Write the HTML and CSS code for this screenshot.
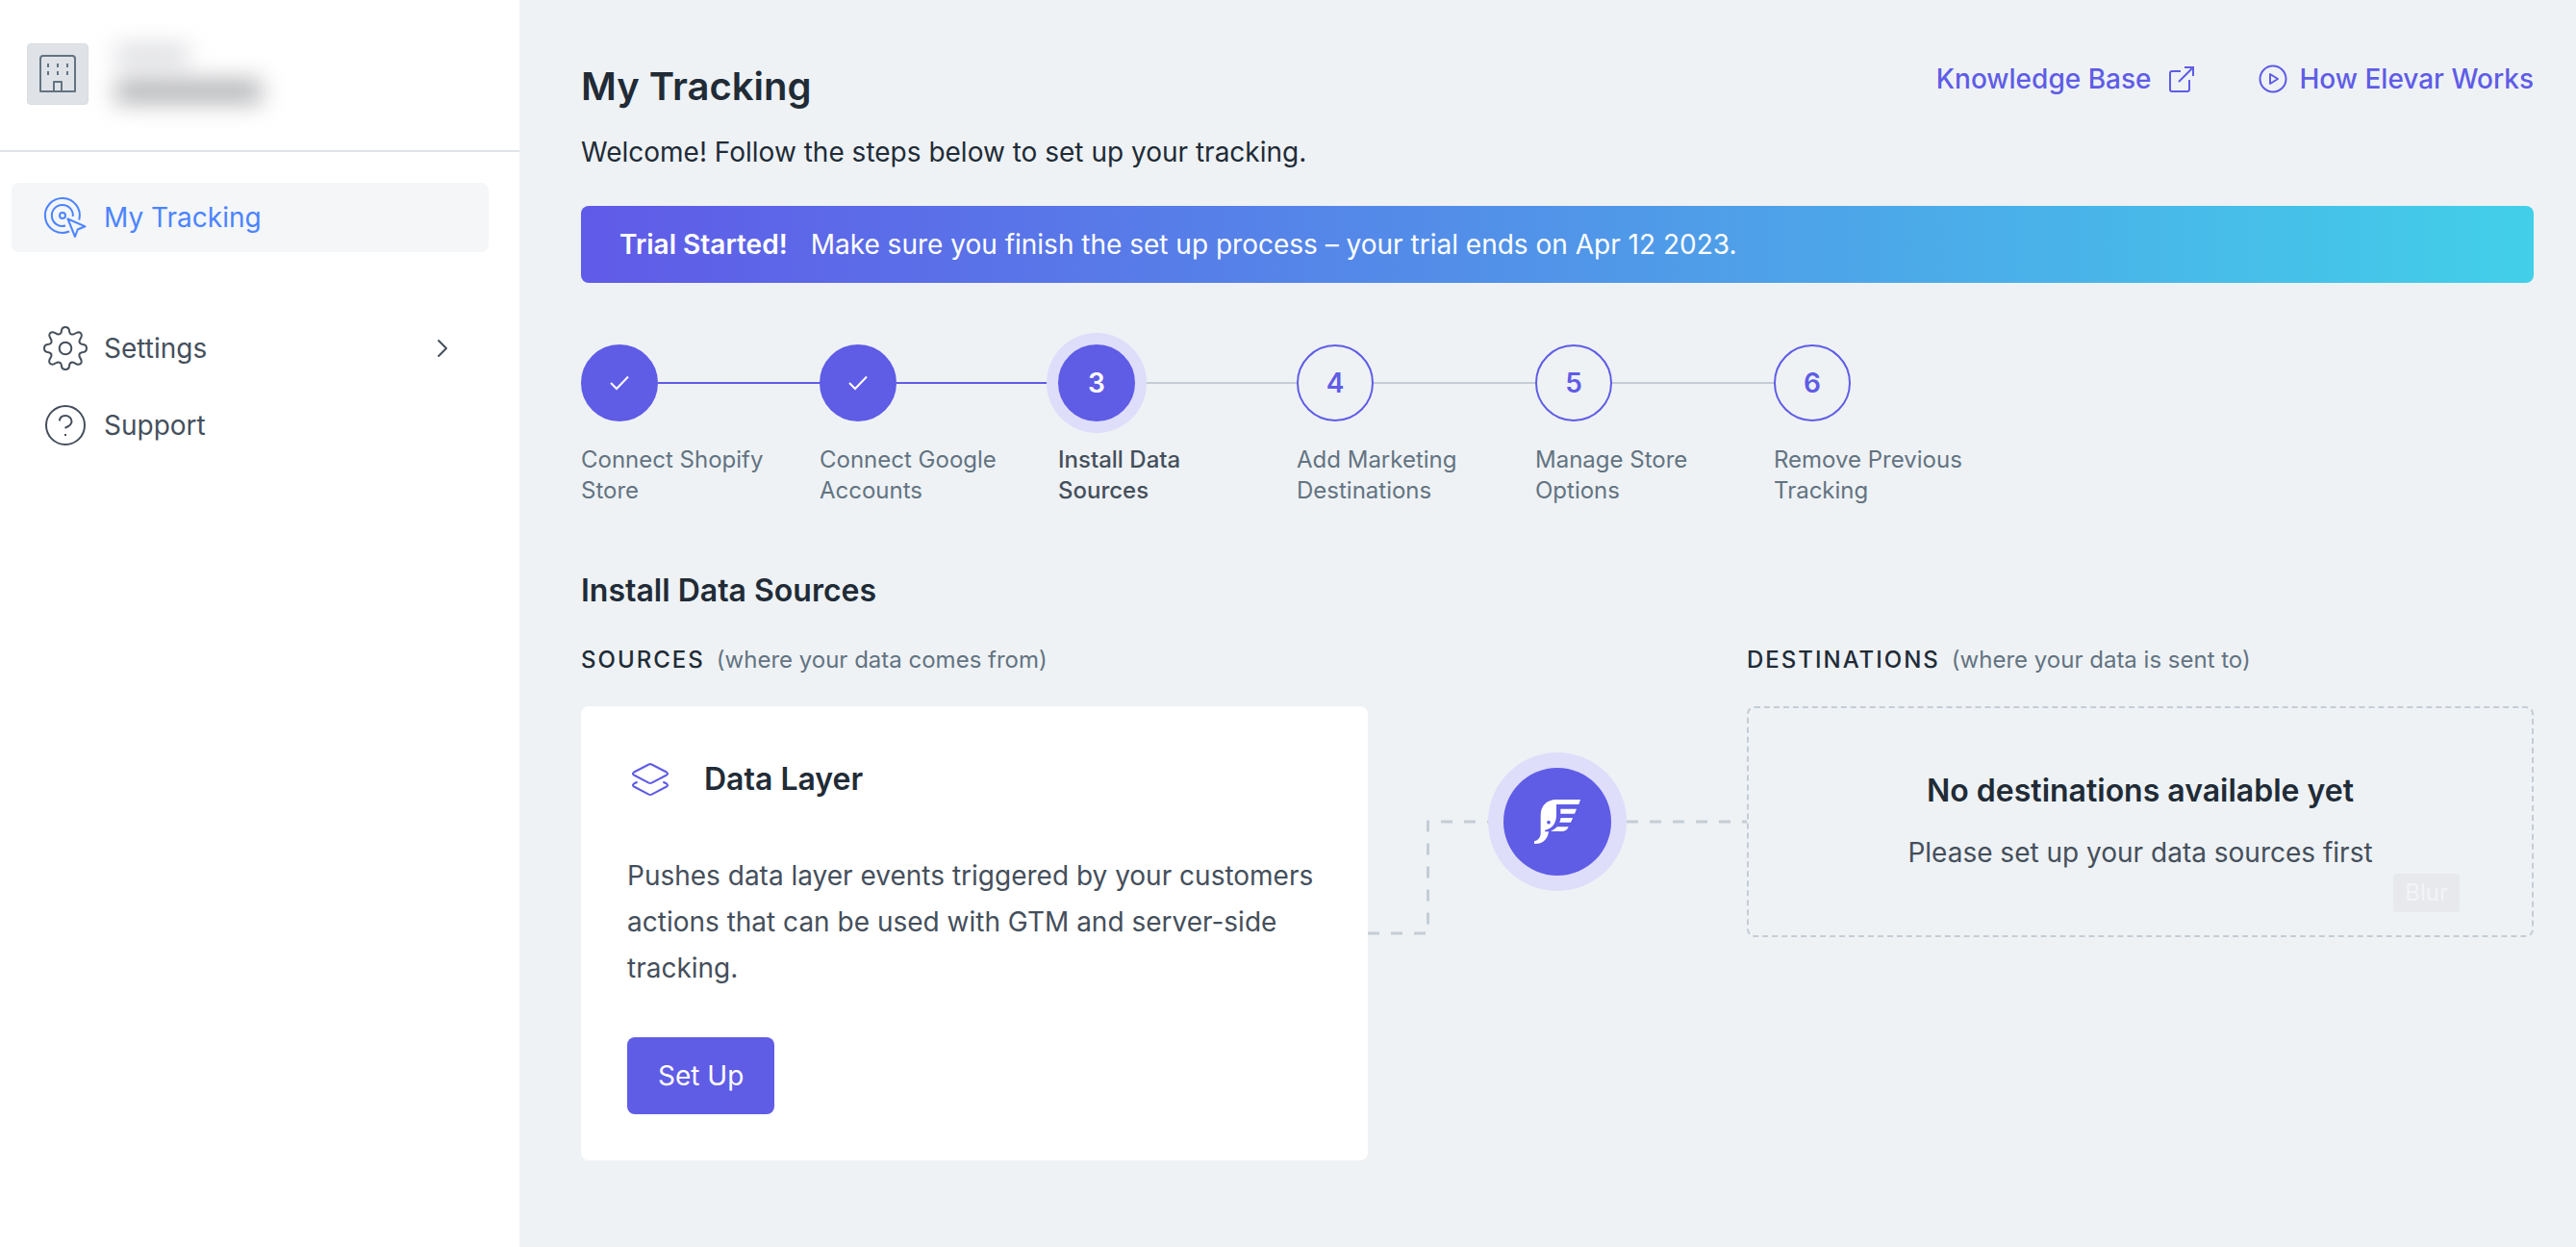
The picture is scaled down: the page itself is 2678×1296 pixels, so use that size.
FILE: index.html
```html
<!DOCTYPE html>
<html lang="en">
  <head>
    <meta charset="UTF-8" />
    <meta name="viewport" content="width=device-width, initial-scale=1.0" />
    <title>My Tracking</title>
    <link rel="stylesheet" href="styles.css">
  </head>
  <body>
    <aside class="sidebar">
      <div class="account">
        <div class="account-icon">
          <svg width="38" height="40" viewBox="0 0 38 40" fill="none" stroke="currentColor" stroke-width="2">
            <path d="M1 38V4a3 3 0 0 1 3-3h30a3 3 0 0 1 3 3v34zM15 38V28h8v10" stroke-linejoin="round" />
            <path d="M9 9v4M19 9v4M29 9v4M9 17v4M19 17v4M29 17v4" />
          </svg>
        </div>
        <div class="account-info">
          <span class="account-label"></span>
          <span class="account-name"></span>
        </div>
      </div>

      <nav class="nav">
        <a class="nav-item active" href="#">
          <svg class="nav-icon" viewBox="0 0 48 48" fill="none" stroke="currentColor" stroke-width="2" stroke-linejoin="round">
            <circle cx="21" cy="22" r="3" />
            <path d="M31.800 23A11 11 0 1 0 24 32.500" />
            <path d="M38.300 26.500A18 18 0 1 0 28 38.500" />
            <path d="M26.500 25.500l18 7.800-7.800 3.200-2.700 7.500z" />
          </svg>
          My Tracking
        </a>
        <a class="nav-item settings" href="#">
          <svg class="nav-icon" viewBox="0 0 48 48" fill="none" stroke="currentColor" stroke-width="2">
            <defs>
              <path id="gear-quarter" d="M24 2C26.500 2 27.700 3.500 28 5.500C28.200 8 29 9.500 31 9.600C34 9.700 34.500 7.500 37.500 7.300C39.800 7.300 41 8.700 40.800 11C40.600 13.500 38.400 14.500 38.500 17C38.600 19 40 19.800 42.500 20C44.800 20.300 46 21.500 46 24" />
            </defs>
            <circle cx="24" cy="24" r="6.300" />
            <use href="#gear-quarter" />
            <use href="#gear-quarter" transform="rotate(90 24 24)" />
            <use href="#gear-quarter" transform="rotate(180 24 24)" />
            <use href="#gear-quarter" transform="rotate(270 24 24)" />
          </svg>
          Settings
          <svg class="chevron" width="12" height="20" viewBox="0 0 12 20" fill="none" stroke="currentColor" stroke-width="2" stroke-linecap="round" stroke-linejoin="round">
            <path d="M2 2l8 8-8 8" />
          </svg>
        </a>
        <a class="nav-item" href="#">
          <svg class="nav-icon" viewBox="0 0 48 48" fill="none" stroke="currentColor" stroke-width="2">
            <circle cx="24" cy="24" r="20" />
            <path d="M18 19.500c0-3.500 2.500-5.500 6-5.500s6.500 2.500 6.500 6c0 3.800-3.500 5.500-7 6.700M23 34h2" />
          </svg>
          Support
        </a>
      </nav>
    </aside>

    <main class="main">
      <header class="header">
        <h1>My Tracking</h1>
        <div class="links">
          <a class="link" href="#">
            Knowledge Base
            <svg class="external" width="28" height="28" viewBox="0 0 28 28" fill="none" stroke="currentColor" stroke-width="2">
              <path d="M13 6H4a2 2 0 0 0-2 2v17a2 2 0 0 0 2 2h16a2 2 0 0 0 2-2V15M11 17L26 2M17 2h9v9" />
            </svg>
          </a>
          <a class="link" href="#">
            <svg width="30" height="30" viewBox="0 0 30 30" fill="none" stroke="currentColor" stroke-width="2" stroke-linejoin="round">
              <circle cx="15" cy="15" r="13.500" />
              <path d="M12 10v10l8-5z" />
            </svg>
            How Elevar Works
          </a>
        </div>
      </header>
      <p class="welcome">Welcome! Follow the steps below to set up your tracking.</p>

      <div class="banner">
        <strong>Trial Started!</strong>
        <span>Make sure you finish the set up process – your trial ends on Apr 12 2023.</span>
      </div>

      <ol class="steps">
        <li class="step done">
          <div class="step-track">
            <span class="step-circle">
              <svg width="20" height="16" viewBox="0 0 20 16" fill="none" stroke="currentColor" stroke-width="2">
                <path d="M1 8l6 6L19 1.500" />
              </svg>
            </span>
          </div>
          <span class="step-label">Connect Shopify Store</span>
        </li>
        <li class="step done">
          <div class="step-track">
            <span class="step-circle">
              <svg width="20" height="16" viewBox="0 0 20 16" fill="none" stroke="currentColor" stroke-width="2">
                <path d="M1 8l6 6L19 1.500" />
              </svg>
            </span>
          </div>
          <span class="step-label">Connect Google Accounts</span>
        </li>
        <li class="step current">
          <div class="step-track"><span class="step-circle">3</span></div>
          <span class="step-label">Install Data Sources</span>
        </li>
        <li class="step">
          <div class="step-track"><span class="step-circle">4</span></div>
          <span class="step-label">Add Marketing Destinations</span>
        </li>
        <li class="step">
          <div class="step-track"><span class="step-circle">5</span></div>
          <span class="step-label">Manage Store Options</span>
        </li>
        <li class="step">
          <div class="step-track"><span class="step-circle">6</span></div>
          <span class="step-label">Remove Previous Tracking</span>
        </li>
      </ol>

      <h2>Install Data Sources</h2>

      <div class="flow">
        <section>
          <div class="column-title"><h3>Sources</h3> <span>(where your data comes from)</span></div>
          <div class="card">
            <div class="card-header">
              <svg width="48" height="48" viewBox="0 -1 48 48" fill="none" stroke="currentColor" stroke-width="2" stroke-linecap="round" stroke-linejoin="round">
                <path d="M22.500 7.500L7 15.500c-1.500 1-1.500 2.200 0 3l15.500 8.200c1 .5 2 .5 3 0L41 18.500c1.500-.8 1.500-2 0-3L25.500 7.500c-1-.5-2-.5-3 0z" />
                <path d="M10 26l-3 1.500c-1.500 1-1.500 2.200 0 3l15.500 8.200c1 .5 2 .5 3 0L41 30.500c1.500-.8 1.500-2 0-3L38 26" />
              </svg>
              <h4>Data Layer</h4>
            </div>
            <p>Pushes data layer events triggered by your customers actions that can be used with GTM and server-side tracking.</p>
            <button type="button" class="button">Set Up</button>
          </div>
        </section>

        <div class="connector">
          <svg class="connector-lines" viewBox="0 0 394 240" fill="none" stroke="currentColor" stroke-width="3" stroke-dasharray="12 12">
            <path d="M0 236H62.500V120H197" />
            <path d="M269 120H394" />
          </svg>
          <div class="logo">
            <svg width="48" height="46" viewBox="585 333 144 138" fill="currentColor">
              <path fill-rule="evenodd" d="M654 333H729L724 348H654V382C654 408 640 424 618 429V433H630C628 455 612 469 598 470L585 471V463C598 460 605 450 605 438V382C605 352 624 333 654 333ZM630 398.500a5.500 5.500 0 1 0 0 11a5.500 5.500 0 1 0 0-11Z" />
              <path d="M667 362H717L711 377H667ZM668 390H705L699 404H664ZM656 418H692C688 427 682 432 674 432H636C644 428 651 424 656 418Z" />
            </svg>
          </div>
        </div>

        <section>
          <div class="column-title"><h3>Destinations</h3> <span>(where your data is sent to)</span></div>
          <div class="empty">
            <h4>No destinations available yet</h4>
            <p>Please set up your data sources first</p>
            <span class="tooltip">Blur</span>
          </div>
        </section>
      </div>
    </main>
  </body>
</html>
```
FILE: styles.css
```css
* {
  box-sizing: border-box;
}

body {
  font-family: Inter, 'Liberation Sans', sans-serif;
  font-size: 28px;
  line-height: 48px;
  margin: 0;
  display: flex;
  min-height: 100vh;
  background-color: #eef2f5;
  color: #212b36;
}

h1,
h2,
h3,
h4,
p {
  margin: 0;
}

a {
  text-decoration: none;
}

svg {
  flex-shrink: 0;
}

/* sidebar */
.sidebar {
  flex: 0 0 540px;
  background-color: white;
}

.account {
  display: flex;
  align-items: center;
  gap: 28px;
  height: 158px;
  padding: 0 28px 2px;
  border-bottom: 2px solid #dfe3e8;
}

.account-icon {
  display: flex;
  justify-content: center;
  align-items: center;
  width: 64px;
  height: 64px;
  border: 1px solid #d8dde2;
  border-radius: 4px;
  background-color: #dfe3e8;
  color: #637381;
}

.account-info {
  display: flex;
  flex-direction: column;
  gap: 16px;
  filter: blur(12px);
}

.account-label {
  width: 76px;
  height: 20px;
  background-color: #d9dade;
}

.account-name {
  width: 152px;
  height: 24px;
  background-color: #b0b1b4;
}

.nav {
  display: flex;
  flex-direction: column;
  gap: 8px;
  padding: 32px 32px 32px 12px;
}

.nav-item {
  display: flex;
  align-items: center;
  gap: 16px;
  height: 72px;
  padding: 0 42px 0 32px;
  border-radius: 8px;
  color: #454f5b;
}

.nav-item.active {
  background-color: #f4f6f8;
  color: #4c84ff;
}

.nav-item.settings {
  margin-top: 56px;
}

.nav-icon {
  width: 48px;
  height: 48px;
}

.chevron {
  margin-left: auto;
}

/* main */
.main {
  flex: 1;
  min-width: 0;
  padding: 64px 44px 64px 64px;
}

.header {
  display: flex;
  justify-content: space-between;
  align-items: flex-start;
  margin-bottom: 18px;
}

h1 {
  font-size: 40px;
  line-height: 52px;
  font-weight: 600;
}

.links {
  display: flex;
  gap: 66px;
}

.link {
  display: flex;
  align-items: center;
  gap: 12px;
  line-height: 36px;
  font-weight: 500;
  color: #5f5ce6;
}

.external {
  margin-left: 6px;
}

.banner {
  display: flex;
  align-items: center;
  gap: 24px;
  height: 80px;
  margin-top: 32px;
  padding: 0 40px;
  border-radius: 8px;
  background: linear-gradient(to right, #605ae8, #42cfe9);
  color: white;
}

.banner strong {
  font-weight: 600;
}

.steps {
  display: flex;
  list-style: none;
  margin: 64px 0 68px;
  padding: 0;
}

.step {
  width: 248px;
  font-size: 24px;
  line-height: 32px;
  color: #637381;
}

.step-track {
  display: flex;
  align-items: center;
  margin-bottom: 24px;
}

.step-track::after {
  content: '';
  flex: 1;
  height: 2px;
  background-color: #c4cdd5;
}

.step.done .step-track::after {
  background-color: #5f5ce6;
}

.step:last-child .step-track::after {
  display: none;
}

.step-circle {
  position: relative;
  display: flex;
  justify-content: center;
  align-items: center;
  width: 80px;
  height: 80px;
  border: 2px solid #5f5ce6;
  border-radius: 50%;
  font-size: 28px;
  font-weight: 600;
  color: #5f5ce6;
}

.step.done .step-circle,
.step.current .step-circle {
  background-color: #5f5ce6;
  color: white;
}

.step.current .step-circle {
  box-shadow: 0 0 0 12px #deddfa;
}

.step-label {
  display: block;
  max-width: 200px;
}

.step.current .step-label {
  font-weight: 500;
  color: #454f5b;
}

h2 {
  margin-bottom: 36px;
  font-size: 32px;
  line-height: 40px;
  font-weight: 600;
}

/* sources -> destinations */
.flow {
  display: grid;
  grid-template-columns: 1fr 394px 1fr;
  align-items: start;
}

.column-title {
  display: flex;
  gap: 12px;
  margin-bottom: 32px;
  font-size: 24px;
  line-height: 32px;
  color: #637381;
}

h3 {
  font-size: 24px;
  font-weight: 500;
  letter-spacing: 2px;
  text-transform: uppercase;
  color: #212b36;
}

h4 {
  font-size: 32px;
  line-height: 40px;
  font-weight: 600;
}

.card {
  padding: 48px;
  border-radius: 8px;
  background-color: white;
  color: #454f5b;
}

.card-header {
  display: flex;
  align-items: center;
  gap: 32px;
  height: 56px;
  margin-bottom: 48px;
  color: #5f5ce6;
}

.card-header h4 {
  color: #212b36;
}

.button {
  height: 80px;
  margin-top: 48px;
  padding: 0 32px;
  border: none;
  border-radius: 8px;
  background-color: #5f5ce6;
  color: white;
  font: inherit;
  cursor: pointer;
}

.connector {
  display: grid;
  place-items: center;
  margin-top: 64px;
  color: #c4cdd5;
}

.connector-lines,
.logo {
  grid-area: 1 / 1;
}

.connector-lines {
  width: 100%;
}

.logo {
  display: flex;
  justify-content: center;
  align-items: center;
  width: 112px;
  height: 112px;
  border-radius: 50%;
  background-color: #5f5ce6;
  box-shadow: 0 0 0 16px #deddfa;
  color: white;
}

.empty {
  position: relative;
  display: flex;
  flex-direction: column;
  justify-content: center;
  align-items: center;
  gap: 20px;
  height: 240px;
  padding-top: 4px;
  border: 2px dashed #c4cdd5;
  border-radius: 8px;
  text-align: center;
}

.empty p {
  color: #454f5b;
}

.tooltip {
  position: absolute;
  right: 75px;
  bottom: 24px;
  padding: 0 12px;
  border-radius: 4px;
  background-color: #e7e9ec;
  color: #f3f4f7;
  font-size: 24px;
  line-height: 40px;
}
```
